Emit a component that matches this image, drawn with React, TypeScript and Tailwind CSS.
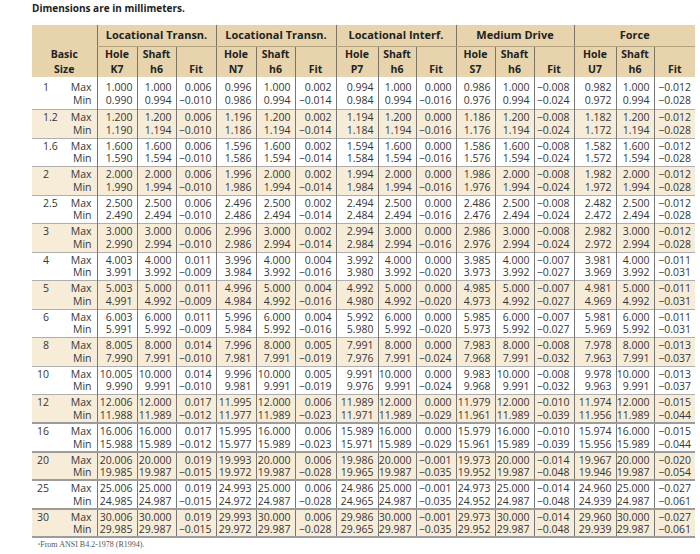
const groups = [
  { title: 'Locational Transn.', hole: 'K7' },
  { title: 'Locational Transn.', hole: 'N7' },
  { title: 'Locational Interf.', hole: 'P7' },
  { title: 'Medium Drive', hole: 'S7' },
  { title: 'Force', hole: 'U7' },
];

const widths = ['w-[65px]', 'w-[40px]', 'w-[39px]', 'w-[40px]', 'w-[40px]', 'w-[39px]', 'w-[41px]', 'w-[42px]', 'w-[38px]', 'w-[40px]', 'w-[39px]', 'w-[39px]', 'w-[40px]', 'w-[42px]', 'w-[38px]', 'w-[41px]'];

// size, max row, min row
const rows: [string, string, string][] = [
  ['1', '1.000 1.000 0.006 0.996 1.000 0.002 0.994 1.000 0.000 0.986 1.000 -0.008 0.982 1.000 -0.012', '0.990 0.994 -0.010 0.986 0.994 -0.014 0.984 0.994 -0.016 0.976 0.994 -0.024 0.972 0.994 -0.028'],
  ['1.2', '1.200 1.200 0.006 1.196 1.200 0.002 1.194 1.200 0.000 1.186 1.200 -0.008 1.182 1.200 -0.012', '1.190 1.194 -0.010 1.186 1.194 -0.014 1.184 1.194 -0.016 1.176 1.194 -0.024 1.172 1.194 -0.028'],
  ['1.6', '1.600 1.600 0.006 1.596 1.600 0.002 1.594 1.600 0.000 1.586 1.600 -0.008 1.582 1.600 -0.012', '1.590 1.594 -0.010 1.586 1.594 -0.014 1.584 1.594 -0.016 1.576 1.594 -0.024 1.572 1.594 -0.028'],
  ['2', '2.000 2.000 0.006 1.996 2.000 0.002 1.994 2.000 0.000 1.986 2.000 -0.008 1.982 2.000 -0.012', '1.990 1.994 -0.010 1.986 1.994 -0.014 1.984 1.994 -0.016 1.976 1.994 -0.024 1.972 1.994 -0.028'],
  ['2.5', '2.500 2.500 0.006 2.496 2.500 0.002 2.494 2.500 0.000 2.486 2.500 -0.008 2.482 2.500 -0.012', '2.490 2.494 -0.010 2.486 2.494 -0.014 2.484 2.494 -0.016 2.476 2.494 -0.024 2.472 2.494 -0.028'],
  ['3', '3.000 3.000 0.006 2.996 3.000 0.002 2.994 3.000 0.000 2.986 3.000 -0.008 2.982 3.000 -0.012', '2.990 2.994 -0.010 2.986 2.994 -0.014 2.984 2.994 -0.016 2.976 2.994 -0.024 2.972 2.994 -0.028'],
  ['4', '4.003 4.000 0.011 3.996 4.000 0.004 3.992 4.000 0.000 3.985 4.000 -0.007 3.981 4.000 -0.011', '3.991 3.992 -0.009 3.984 3.992 -0.016 3.980 3.992 -0.020 3.973 3.992 -0.027 3.969 3.992 -0.031'],
  ['5', '5.003 5.000 0.011 4.996 5.000 0.004 4.992 5.000 0.000 4.985 5.000 -0.007 4.981 5.000 -0.011', '4.991 4.992 -0.009 4.984 4.992 -0.016 4.980 4.992 -0.020 4.973 4.992 -0.027 4.969 4.992 -0.031'],
  ['6', '6.003 6.000 0.011 5.996 6.000 0.004 5.992 6.000 0.000 5.985 6.000 -0.007 5.981 6.000 -0.011', '5.991 5.992 -0.009 5.984 5.992 -0.016 5.980 5.992 -0.020 5.973 5.992 -0.027 5.969 5.992 -0.031'],
  ['8', '8.005 8.000 0.014 7.996 8.000 0.005 7.991 8.000 0.000 7.983 8.000 -0.008 7.978 8.000 -0.013', '7.990 7.991 -0.010 7.981 7.991 -0.019 7.976 7.991 -0.024 7.968 7.991 -0.032 7.963 7.991 -0.037'],
  ['10', '10.005 10.000 0.014 9.996 10.000 0.005 9.991 10.000 0.000 9.983 10.000 -0.008 9.978 10.000 -0.013', '9.990 9.991 -0.010 9.981 9.991 -0.019 9.976 9.991 -0.024 9.968 9.991 -0.032 9.963 9.991 -0.037'],
  ['12', '12.006 12.000 0.017 11.995 12.000 0.006 11.989 12.000 0.000 11.979 12.000 -0.010 11.974 12.000 -0.015', '11.988 11.989 -0.012 11.977 11.989 -0.023 11.971 11.989 -0.029 11.961 11.989 -0.039 11.956 11.989 -0.044'],
  ['16', '16.006 16.000 0.017 15.995 16.000 0.006 15.989 16.000 0.000 15.979 16.000 -0.010 15.974 16.000 -0.015', '15.988 15.989 -0.012 15.977 15.989 -0.023 15.971 15.989 -0.029 15.961 15.989 -0.039 15.956 15.989 -0.044'],
  ['20', '20.006 20.000 0.019 19.993 20.000 0.006 19.986 20.000 -0.001 19.973 20.000 -0.014 19.967 20.000 -0.020', '19.985 19.987 -0.015 19.972 19.987 -0.028 19.965 19.987 -0.035 19.952 19.987 -0.048 19.946 19.987 -0.054'],
  ['25', '25.006 25.000 0.019 24.993 25.000 0.006 24.986 25.000 -0.001 24.973 25.000 -0.014 24.960 25.000 -0.027', '24.985 24.987 -0.015 24.972 24.987 -0.028 24.965 24.987 -0.035 24.952 24.987 -0.048 24.939 24.987 -0.061'],
  ['30', '30.006 30.000 0.019 29.993 30.000 0.006 29.986 30.000 -0.001 29.973 30.000 -0.014 29.960 30.000 -0.027', '29.985 29.987 -0.015 29.972 29.987 -0.028 29.965 29.987 -0.035 29.952 29.987 -0.048 29.939 29.987 -0.061'],
];

const fmt = (v: string) => v.replace('-', '\u2212');

function SizeLabel({ size }: { size: string }) {
  const [whole, frac] = size.split('.');
  return (
    <span className="flex">
      <span className="w-[17px] text-right">{whole}</span>
      {frac && <span>.{frac}</span>}
    </span>
  );
}

export default function App() {
  return (
    <div className="h-[554px] w-[700px] overflow-hidden bg-white pl-[32px] font-['Open_Sans',sans-serif] text-[#363636]">
      <div className="h-[24.5px] pt-[2px] text-[10px] font-bold leading-[12px] text-[#1d1d1d]">Dimensions are in millimeters.</div>

      <table className="table-fixed border-collapse text-[10.5px]">
        <colgroup>
          {widths.map((w, i) => (
            <col key={i} className={w} />
          ))}
        </colgroup>
        <thead className="bg-[#e7d4ac] text-[10.5px] font-bold leading-[14.5px] text-[#222]">
          <tr className="h-[21.5px]">
            <th rowSpan={2} className="pb-[1px] align-bottom">
              Basic
              <br />
              Size
            </th>
            {groups.map((g, i) => (
              <th key={i} colSpan={3} className="border-b border-l border-b-[#b5a27e] border-l-[#7b7365] text-[11px]">
                {g.title}
              </th>
            ))}
          </tr>
          <tr className="h-[31px]">
            {groups.map((g, i) => (
              <>
                <th key={`h${i}`} className="border-l border-[#7b7365] pb-[1px] align-bottom">
                  Hole
                  <br />
                  {g.hole}
                </th>
                <th key={`s${i}`} className="border-l border-[#7b7365] pb-[1px] align-bottom">
                  Shaft
                  <br />
                  h6
                </th>
                <th key={`f${i}`} className="border-l border-[#7b7365] pb-[1px] align-bottom">
                  Fit
                </th>
              </>
            ))}
          </tr>
        </thead>
        <tbody className="leading-[12.5px]">
          {rows.map(([size, max, min], r) => {
            const maxVals = max.split(' ');
            const minVals = min.split(' ');
            const heavy = r >= 11;
            return (
              <tr
                key={size}
                className={`${r === 0 ? 'h-[32.5px]' : 'h-[28.5px]'} ${r % 2 === 1 ? 'bg-[#f6ecd8]' : 'bg-white'} ${
                  heavy ? 'border-b-2 border-[#9c9c9c]' : 'border-b border-[#aeaeae]'
                }`}
              >
                <td className={`${r === 0 ? 'pt-[4px]' : 'pt-[1px]'} align-top`}>
                  <div className="flex justify-between pr-[5px]">
                    <SizeLabel size={size} />
                    <span>Max</span>
                  </div>
                  <div className="pr-[5px] text-right">Min</div>
                </td>
                {maxVals.map((v, c) => (
                  <td key={c} className={`border-l border-l-[#777] pr-[4px] text-right align-top ${r === 0 ? 'pt-[4px]' : 'pt-[1px]'}`}>
                    <div>{fmt(v)}</div>
                    <div>{fmt(minVals[c])}</div>
                  </td>
                ))}
              </tr>
            );
          })}
        </tbody>
      </table>

      <div className="mt-[2px] pl-[6px] font-['Liberation_Serif',serif] text-[8px] leading-[10px] text-[#555]">
        <sup className="text-[5px]">a</sup>From ANSI B4.2-1978 (R1994).
      </div>
    </div>
  );
}
